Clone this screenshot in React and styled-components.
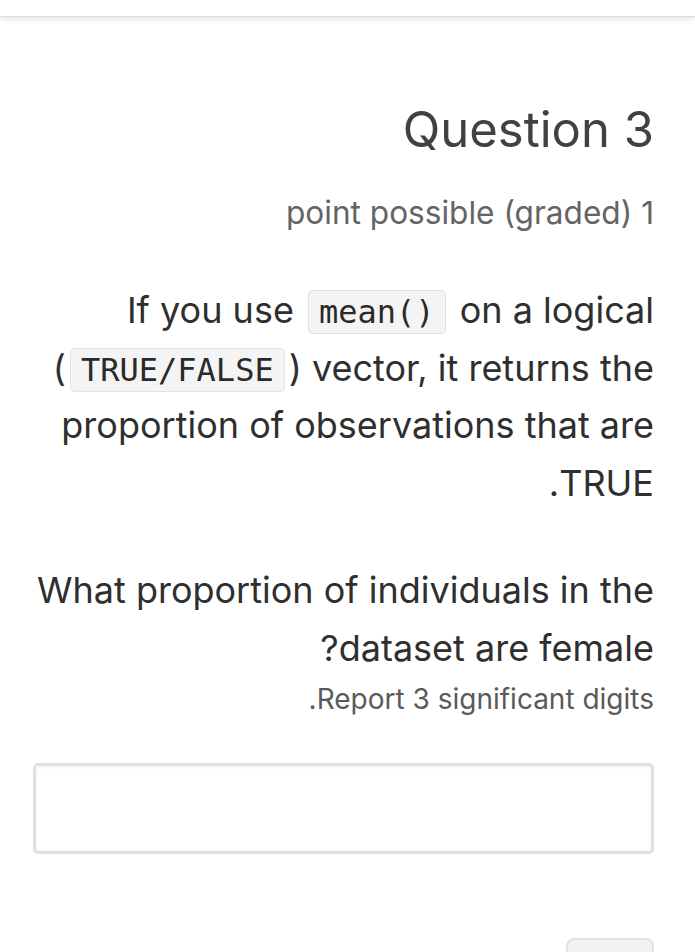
import React from 'react';
import styled, { createGlobalStyle } from 'styled-components';

const GlobalStyle = createGlobalStyle`
  html, body {
    margin: 0;
    padding: 0;
    background: #fff;
  }
  body {
    font-family: Inter, "Noto Sans", sans-serif;
    color: #313131;
  }
`;

const TopBar = styled.div`
  height: 16px;
  background: #fff;
  box-shadow: 0 2px 6px rgba(0, 0, 0, 0.12);
  border-bottom: 1px solid #dcdcdc;
`;

const Problem = styled.div`
  direction: rtl;
  text-align: right;
  padding: 84px 41px 0 33px;
`;

const Title = styled.h3`
  margin: 0;
  font-size: 49px;
  font-weight: 400;
  line-height: 58px;
  color: #3f4143;
`;

const Meta = styled.div`
  margin-top: 34px;
  font-size: 31.6px;
  line-height: 40px;
  color: #646464;
`;

const Para = styled.p`
  margin: ${(p) => p.$top || 0}px 0 0;
  font-size: ${(p) => p.$size || 36}px;
  line-height: ${(p) => p.$lh || 57.5}px;
  color: ${(p) => p.$muted ? '#5a5a5a' : '#2f2f2f'};
`;

const Code = styled.code`
  font-family: "DejaVu Sans Mono", "Liberation Mono", monospace;
  font-size: 32px;
  line-height: 1;
  color: #2a2a2a;
  background: #f4f4f4;
  border: 1px solid #e3e3e3;
  border-radius: 5px;
  padding: 2px 10px;
  margin: 0 4px;
`;

const Answer = styled.input`
  display: block;
  box-sizing: border-box;
  width: 100%;
  height: 91px;
  margin-top: 42px;
  border: 3px solid #e0e0e0;
  border-radius: 5px;
  background: #fff;
  box-shadow: inset 0 1px 4px rgba(0, 0, 0, 0.06);
  outline: none;
`;

const Actions = styled.div`
  display: flex;
  justify-content: flex-start;
  margin-top: 84px;
`;

const SubmitButton = styled.button`
  width: 88px;
  height: 40px;
  border: 2px solid #e2e2e2;
  border-radius: 8px;
  background: #f1f1f1;
`;

export default function App() {
  return (
    <>
      <GlobalStyle />
      <TopBar />
      <Problem>
        <Title>Question 3</Title>
        <Meta>1 point possible (graded)</Meta>
        <Para $top={49}>
          If you use <Code>mean()</Code> on a logical (<Code>TRUE/FALSE</Code>) vector, it returns the
          proportion of observations that are TRUE.
        </Para>
        <Para $top={50}>
          What proportion of individuals in the dataset are female?
        </Para>
        <Para $size={28} $lh={44} $muted>Report 3 significant digits.</Para>
        <Answer type="text" />
        <Actions>
          <SubmitButton />
        </Actions>
      </Problem>
    </>
  );
}
